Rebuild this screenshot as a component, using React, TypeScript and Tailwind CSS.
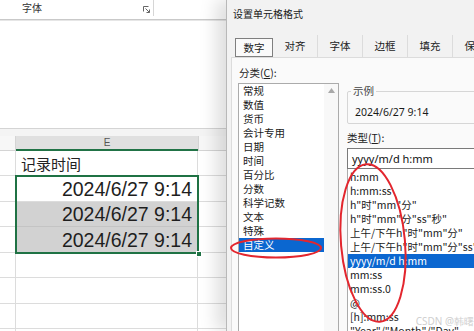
import React from 'react';

const dateText = '2024/6/27 9:14';

const categories = ['常规', '数值', '货币', '会计专用', '日期', '时间', '百分比', '分数', '科学记数', '文本', '特殊', '自定义', '', '', '', '', '', ''];

const formats = [
    'h:mm',
    'h:mm:ss',
    'h"时"mm"分"',
    'h"时"mm"分"ss"秒"',
    '上午/下午h"时"mm"分"',
    '上午/下午h"时"mm"分"ss"秒"',
    'yyyy/m/d h:mm',
    'mm:ss',
    'mm:ss.0',
    '@',
    '[h]:mm:ss',
    '"Year"/"Month"/"Day"',
];

const sheetRows = [
    {h: 'h-[25px]', kind: 'title'},
    {h: 'h-[26px]', kind: 'date'},
    {h: 'h-[25px]', kind: 'date-sel'},
    {h: 'h-[26px]', kind: 'date-sel'},
    {h: 'h-[25px]', kind: 'empty'},
    {h: 'h-[26px]', kind: 'empty'},
    {h: 'h-[25px]', kind: 'empty'},
    {h: 'h-[26px]', kind: 'empty'},
];

const Sheet = () => {
    return (
        <div className="relative w-[226px] shrink-0 bg-white">
            {/* ribbon group */}
            <div className="h-[19px] bg-white">
                <div className="flex h-[16px] w-[154px] items-center justify-between border-r border-[#d6d6d6] pl-[22px] pr-[2px]">
                    <span className="text-[10px] leading-[12px] text-[#333]">字体</span>
                    <svg width="8" height="8" viewBox="0 0 8 8" className="mt-[4px]">
                        <path d="M0.5 0.5h5M0.5 0.5v5" stroke="#666" strokeWidth="1" fill="none" />
                        <path d="M2.5 2.5l4 4M6.5 3.5v3h-3" stroke="#666" strokeWidth="1" fill="none" />
                    </svg>
                </div>
            </div>
            <div className="h-px bg-[#c9c9c9]" />
            <div className="h-px bg-[#e6e6e6]" />
            <div className="h-[107px] bg-white" />
            <div className="h-px bg-[#d4d4d4]" />
            <div className="h-[7px] bg-[#f4f4f4]" />

            {/* column header */}
            <div className="flex h-[15px]">
                <div className="w-[16px] border-r border-b border-[#d4d4d4] bg-[#f7f7f7]" />
                <div className="flex w-[182px] items-center justify-center border-b-2 border-[#217346] bg-[#e0e0e0] text-[10px] leading-none text-[#555] font-['Liberation_Sans',sans-serif]">
                    E
                </div>
                <div className="flex-1 border-l border-b border-[#d4d4d4] bg-[#f7f7f7]" />
            </div>

            {sheetRows.map((r, i) => (
                <div key={i} className={`flex ${r.h}`}>
                    <div className="w-[16px] border-r border-b border-[#dcdcdc]" />
                    <div
                        className={`flex w-[182px] items-end border-r border-b border-[#dcdcdc] ${
                            r.kind === 'date-sel' ? 'bg-[#d2d2d2] border-b-[#c4c4c4]' : ''
                        } ${r.kind === 'title' ? 'justify-start pl-[5px]' : 'justify-end pr-[5px]'}`}
                    >
                        {r.kind === 'title' && (
                            <span className="pb-[1px] text-[15px] leading-[20px] text-[#222]">记录时间</span>
                        )}
                        {(r.kind === 'date' || r.kind === 'date-sel') && (
                            <span className="text-[19.5px] leading-[24px] text-[#1e1e1e] font-['Liberation_Sans',sans-serif]">
                                {dateText}
                            </span>
                        )}
                    </div>
                    <div className="flex-1 border-b border-[#dcdcdc]" />
                </div>
            ))}

            {/* selection */}
            <div className="absolute left-[15px] top-[175px] h-[79px] w-[184px] border-2 border-[#1f7244]" />
            <div className="absolute left-[196px] top-[251px] h-[6px] w-[6px] border border-white bg-[#1f7244]" />
        </div>
    );
};

const FormatDialog = () => {
    return (
        <div className="relative z-10 flex-1 border-l border-[#b8b8b8] bg-[#f2f2f2] shadow-[-10px_0_16px_rgba(0,0,0,0.13)]">
            <div className="flex h-[26px] items-center pl-[6px] text-[10px] text-[#1a1a1a]">设置单元格格式</div>

            {/* tabs */}
            <div className="mt-[9px] flex h-[22px] items-end pl-[8px] text-[10.5px] text-[#222]">
                <div className="flex h-[19px] w-[38px] shrink-0 items-center justify-center border border-[#7f7f7f] bg-[#fafafa]">数字</div>
                {['对齐', '字体', '边框', '填充', '保护'].map((t) => (
                    <div key={t} className="flex h-[22px] w-[45px] shrink-0 items-center justify-center border-r border-[#dcdcdc]">
                        {t}
                    </div>
                ))}
            </div>

            <div className="ml-[4px] h-[300px] border-t border-l border-[#dcdcdc] bg-[#fafafa]">
                <div className="flex pt-[8px]">
                    {/* category column */}
                    <div className="ml-[6px] w-[101px] shrink-0">
                        <div className="h-[14px] pl-[1px] text-[10.5px] leading-[14px] text-[#222]">
                            分类(<span className="underline">C</span>):
                        </div>
                        <div className="mt-[3px] flex h-[260px] border border-[#ababab] bg-white">
                            <div className="w-[85px]">
                                {categories.map((c, i) => (
                                    <div
                                        key={i}
                                        className={`h-[14px] pl-[4px] text-[10.5px] leading-[14px] ${
                                            c === '自定义' ? 'bg-[#0b67d0] text-white' : 'text-[#1a1a1a]'
                                        }`}
                                    >
                                        {c}
                                    </div>
                                ))}
                            </div>
                            <div className="flex flex-1 justify-center bg-[#f8f8f8] pt-[4px]">
                                <svg width="7" height="5" viewBox="0 0 7 5">
                                    <path d="M0 5L3.5 0L7 5Z" fill="#a9a9a9" />
                                </svg>
                            </div>
                        </div>
                    </div>

                    {/* type column */}
                    <div className="ml-[8px] w-[150px] shrink-0 pt-[25px]">
                        <div className="relative h-[33px] rounded-[2px] border border-[#d6d6d6]">
                            <span className="absolute -top-[8px] left-[3px] bg-[#fafafa] px-[2px] text-[10.5px] leading-[14px] text-[#444]">
                                示例
                            </span>
                            <div className="pl-[7px] pt-[13px] text-[10.5px] leading-[14px] text-[#1a1a1a] font-['Noto_Sans',sans-serif]">
                                {dateText}
                            </div>
                        </div>
                        <div className="mt-[7px] h-[14px] text-[10.5px] leading-[14px] text-[#222]">
                            类型(<span className="underline">T</span>):
                        </div>
                        <div className="mt-[3px] h-[21px] border border-[#7a7a7a] bg-white pl-[4px] text-[11px] leading-[19px] text-[#111] font-['Noto_Sans',sans-serif]">
                            yyyy/m/d h:mm
                        </div>
                        <div className="h-[200px] border border-t-0 border-[#ababab] bg-white pt-px">
                            {formats.map((f, i) => (
                                <div
                                    key={i}
                                    className={`h-[14px] whitespace-nowrap pl-[2px] text-[10.5px] leading-[14px] ${
                                        i === 6 ? 'bg-[#0b67d0] text-white' : 'text-[#1a1a1a]'
                                    }`}
                                >
                                    {f}
                                </div>
                            ))}
                        </div>
                    </div>
                </div>
            </div>

            <div className="absolute bottom-[2px] right-[4px] text-[10px] text-[#cfcfcf] font-['Noto_Sans',sans-serif]">
                CSDN @韩曙江湖
            </div>
        </div>
    );
};

export default function App() {
    return (
        <div className="relative flex h-[331px] w-[474px] overflow-hidden bg-white font-['Noto_Sans_CJK_SC','Noto_Sans',sans-serif]">
            <Sheet />
            <FormatDialog />
            {/* red annotation rings */}
            <svg className="pointer-events-none absolute left-0 top-0 z-20" width="474" height="331" viewBox="0 0 474 331">
                <ellipse cx="276" cy="248" rx="45" ry="9.5" fill="none" stroke="#e3262e" strokeWidth="2" />
                <ellipse cx="373" cy="243" rx="32" ry="79" transform="rotate(-5 373 243)" fill="none" stroke="#e3262e" strokeWidth="2" />
            </svg>
        </div>
    );
}
